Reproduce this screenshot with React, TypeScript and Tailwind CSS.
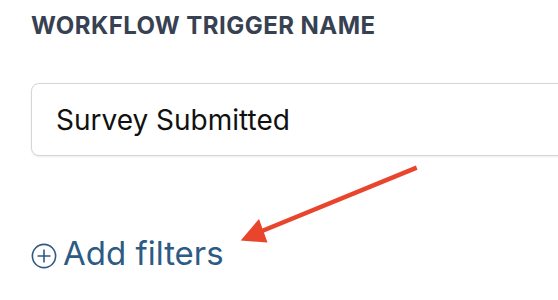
import { useState } from "react";

function CirclePlus() {
  return (
    <svg width="26" height="26" viewBox="0 0 26 26" fill="none" className="mt-[5px] shrink-0">
      <circle cx="13" cy="13" r="11.6" stroke="#2d5b84" strokeWidth="1.6" />
      <path d="M13 6.5v13M6.5 13h13" stroke="#2d5b84" strokeWidth="1.6" />
    </svg>
  );
}

export default function App() {
  const [name, setName] = useState("Survey Submitted");

  return (
    <div
      className="relative w-[558px] h-[300px] overflow-hidden bg-white"
      style={{ fontFamily: "Inter, 'Noto Sans', sans-serif" }}
    >
      <div className="pl-[31px] pt-[10px]">
        {/* Section label */}
        <h2 className="text-[24px] leading-[32px] font-bold tracking-[0.45px] text-[#374151]">
          WORKFLOW TRIGGER NAME
        </h2>

        {/* Trigger name field */}
        <div className="mt-[41px] w-[600px] h-[73px] flex items-center pl-[24px] rounded-[8px] border-[1.5px] border-[#d3d6db] bg-white shadow-[0_1px_2px_rgba(0,0,0,0.08)]">
          <input
            value={name}
            onChange={(e) => setName(e.target.value)}
            className="w-full text-[28px] leading-[36px] text-[#111111] outline-none bg-transparent"
          />
        </div>

        {/* Add filters */}
        <button className="mt-[77px] flex items-center gap-[6px] text-[#2d5b84]">
          <CirclePlus />
          <span className="text-[33px] leading-[40px]">Add filters</span>
        </button>
      </div>

      {/* Annotation arrow */}
      <svg className="absolute left-0 top-0 pointer-events-none" width="558" height="300" viewBox="0 0 558 300">
        <line x1="416.7" y1="167.7" x2="262" y2="231" stroke="#e8452c" strokeWidth="4.5" />
        <polygon points="240.7,240.5 259,219 267.5,242.5" fill="#e8452c" />
      </svg>
    </div>
  );
}
